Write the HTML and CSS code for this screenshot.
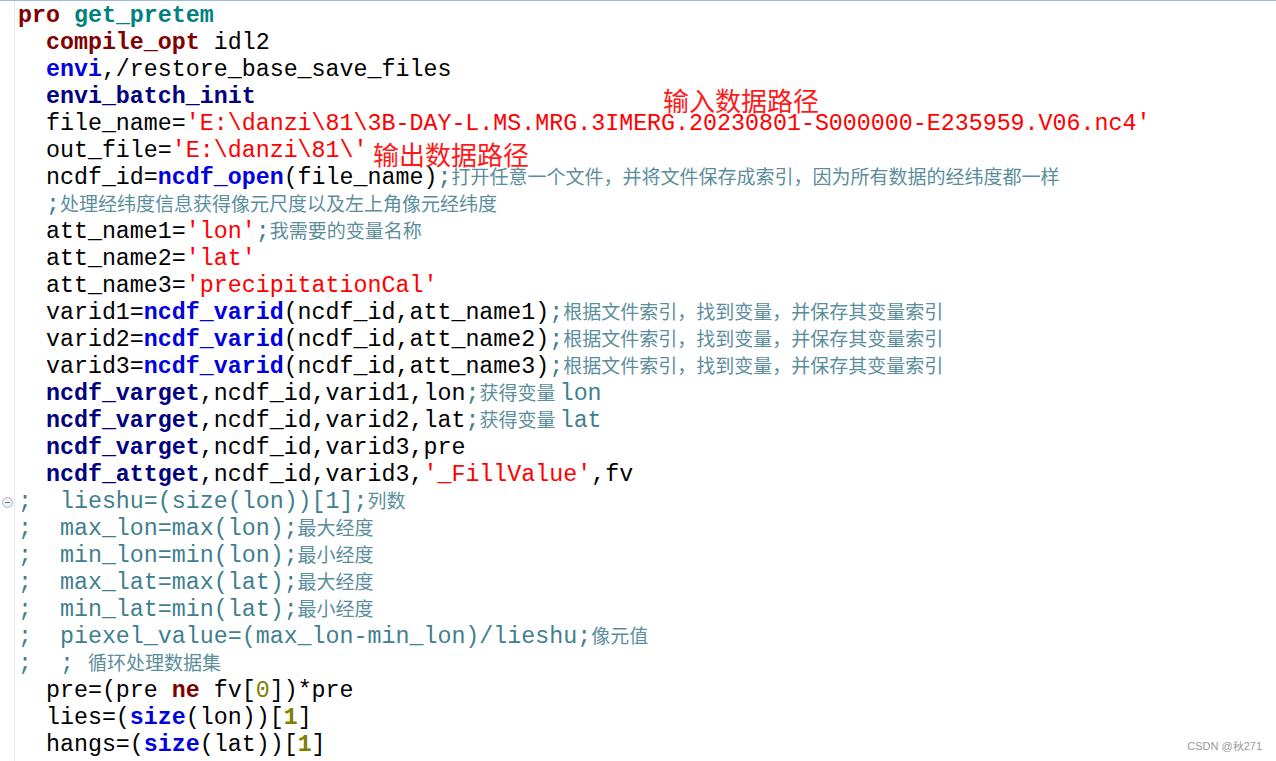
FILE: index.html
```html
<!DOCTYPE html>
<html>
<head>
<meta charset="utf-8">
<link rel="stylesheet" href="styles.css">
</head>
<body>
<div class="editor">
  <div class="gutter">
    <div class="gl"></div><div class="gl"></div><div class="gl"></div><div class="gl"></div>
    <div class="gl"></div><div class="gl"></div><div class="gl"></div><div class="gl"></div>
    <div class="gl"></div><div class="gl"></div><div class="gl"></div><div class="gl"></div>
    <div class="gl"></div><div class="gl"></div><div class="gl"></div><div class="gl"></div>
    <div class="gl"></div><div class="gl"></div>
    <div class="gl"><span class="fold"><span class="minus"></span></span></div>
    <div class="gl"></div><div class="gl"></div><div class="gl"></div><div class="gl"></div>
    <div class="gl"></div><div class="gl"></div><div class="gl"></div><div class="gl"></div>
    <div class="gl"></div>
  </div>
  <div class="code">
<div class="ln"><span class="kw">pro</span> <span class="pn">get_pretem</span></div>
<div class="ln">  <span class="kw">compile_opt</span> idl2</div>
<div class="ln">  <span class="fn">envi</span>,/restore_base_save_files</div>
<div class="ln">  <span class="pr">envi_batch_init</span></div>
<div class="ln">  file_name=<span class="st">'E:\danzi\81\3B-DAY-L.MS.MRG.3IMERG.20230801-S000000-E235959.V06.nc4'</span></div>
<div class="ln">  out_file=<span class="st">'E:\danzi\81\'</span></div>
<div class="ln">  ncdf_id=<span class="fn">ncdf_open</span>(file_name)<span class="cm">;<span class="cj">打开任意一个文件，并将文件保存成索引，因为所有数据的经纬度都一样</span></span></div>
<div class="ln">  <span class="cm">;<span class="cj">处理经纬度信息获得像元尺度以及左上角像元经纬度</span></span></div>
<div class="ln">  att_name1=<span class="st">'lon'</span><span class="cm">;<span class="cj">我需要的变量名称</span></span></div>
<div class="ln">  att_name2=<span class="st">'lat'</span></div>
<div class="ln">  att_name3=<span class="st">'precipitationCal'</span></div>
<div class="ln">  varid1=<span class="fn">ncdf_varid</span>(ncdf_id,att_name1)<span class="cm">;<span class="cj">根据文件索引，找到变量，并保存其变量索引</span></span></div>
<div class="ln">  varid2=<span class="fn">ncdf_varid</span>(ncdf_id,att_name2)<span class="cm">;<span class="cj">根据文件索引，找到变量，并保存其变量索引</span></span></div>
<div class="ln">  varid3=<span class="fn">ncdf_varid</span>(ncdf_id,att_name3)<span class="cm">;<span class="cj">根据文件索引，找到变量，并保存其变量索引</span></span></div>
<div class="ln">  <span class="pr">ncdf_varget</span>,ncdf_id,varid1,lon<span class="cm">;<span class="cj">获得变量 </span>lon</span></div>
<div class="ln">  <span class="pr">ncdf_varget</span>,ncdf_id,varid2,lat<span class="cm">;<span class="cj">获得变量 </span>lat</span></div>
<div class="ln">  <span class="pr">ncdf_varget</span>,ncdf_id,varid3,pre</div>
<div class="ln">  <span class="pr">ncdf_attget</span>,ncdf_id,varid3,<span class="st">'_FillValue'</span>,fv</div>
<div class="ln"><span class="cm">;  lieshu=(size(lon))[1];<span class="cj">列数</span></span></div>
<div class="ln"><span class="cm">;  max_lon=max(lon);<span class="cj">最大经度</span></span></div>
<div class="ln"><span class="cm">;  min_lon=min(lon);<span class="cj">最小经度</span></span></div>
<div class="ln"><span class="cm">;  max_lat=max(lat);<span class="cj">最大经度</span></span></div>
<div class="ln"><span class="cm">;  min_lat=min(lat);<span class="cj">最小经度</span></span></div>
<div class="ln"><span class="cm">;  piexel_value=(max_lon-min_lon)/lieshu;<span class="cj">像元值</span></span></div>
<div class="ln"><span class="cm">;  ; <span class="cj">循环处理数据集</span></span></div>
<div class="ln">  pre=(pre <span class="kw">ne</span> fv[<span class="nm">0</span>])*pre</div>
<div class="ln">  lies=(<span class="fn">size</span>(lon))[<span class="nm b">1</span>]</div>
<div class="ln">  hangs=(<span class="fn">size</span>(lat))[<span class="nm b">1</span>]</div>
  </div>
  <div class="note note-in">输入数据路径</div>
  <div class="note note-out">输出数据路径</div>
  <div class="mark">CSDN @秋271</div>
</div>
</body>
</html>
```
FILE: styles.css
```css
html, body {
  margin: 0;
  padding: 0;
  background: #ffffff;
}
.editor {
  position: relative;
  width: 1276px;
  height: 760px;
  border-top: 1px solid #9dbad6;
  display: flex;
  overflow: hidden;
}
.gutter {
  width: 14px;
  border-right: 1px solid #e8e8e8;
  display: flex;
  flex-direction: column;
  flex: none;
  padding-top: 2px;
}
.gl {
  height: 27px;
  position: relative;
  display: flex;
  align-items: center;
  justify-content: center;
}
.fold {
  width: 9px;
  height: 9px;
  border: 1px solid #a9b6c8;
  border-radius: 50%;
  background: #eef2f8;
  display: flex;
  align-items: center;
  justify-content: center;
  margin-left: 1px;
}
.minus {
  width: 5px;
  height: 1px;
  background: #6c7c94;
}
.code {
  padding-left: 3px;
  padding-top: 2px;
  font-family: "Liberation Mono", "Courier New", monospace;
  font-size: 23.3px;
  color: #000000;
}
.ln {
  height: 27px;
  line-height: 27px;
  white-space: pre;
}
.kw { color: #7f0000; font-weight: bold; }
.pn { color: #008080; font-weight: bold; }
.fn { color: #0000e0; font-weight: bold; }
.pr { color: #000080; font-weight: bold; }
.st { color: #ff0000; }
.nm { color: #808000; }
.nm.b { font-weight: bold; }
.cm { color: #3f7f8f; }
.cj {
  font-family: "Noto Sans CJK SC", sans-serif;
  font-size: 19px;
  line-height: 1;
  color: #5b8e9c;
}
.note {
  position: absolute;
  font-family: "Noto Sans CJK SC", sans-serif;
  font-size: 26px;
  line-height: 1;
  color: #ff1a1a;
}
.note-in { left: 663px; top: 86px; }
.note-out { left: 373px; top: 140px; }
.mark {
  position: absolute;
  right: 14px;
  top: 738px;
  font-family: "Liberation Sans", Arial, sans-serif;
  font-size: 11px;
  color: #9a9a9a;
}
```
